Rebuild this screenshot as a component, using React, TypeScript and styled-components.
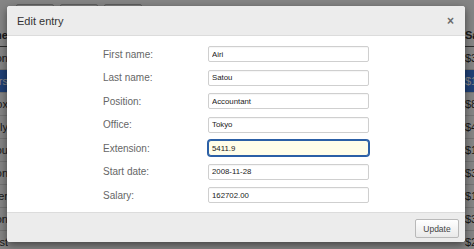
import { Fragment } from "react";
import styled, { createGlobalStyle } from "styled-components";

const GlobalStyle = createGlobalStyle`
    html, body {
        margin: 0;
        padding: 0;
        background: #ffffff;
    }
    body {
        font-family: "Liberation Sans", Arial, sans-serif;
    }
`;

const Page = styled.div`
    position: relative;
    width: 474px;
    height: 249px;
    overflow: hidden;
    background: #ffffff;
`;

const Toolbar = styled.div`
    display: flex;
    gap: 6px;
    height: 24px;
    padding: 0 0 0 16px;
    align-items: flex-end;
`;

const ToolButton = styled.div`
    width: 36px;
    height: 18px;
    border: 1px solid #b8b8b8;
    border-radius: 2px;
    background: #f4f4f4;
`;

const Table = styled.div`
    display: flex;
    flex-direction: column;
    font-size: 11px;
    color: #333;
`;

const TableRow = styled.div<{ $selected?: boolean; $head?: boolean }>`
    display: grid;
    grid-template-columns: 8px 457px 40px;
    height: 22px;
    align-items: center;
    border-bottom: 1px solid ${(p) => (p.$head ? "#555" : "#ddd")};
    background: ${(p) => (p.$selected ? "#3e7be0" : "#fff")};
    color: ${(p) => (p.$selected ? "#fff" : "#333")};
    font-weight: ${(p) => (p.$head ? 700 : 400)};
`;

const CutCell = styled.div`
    overflow: hidden;
    white-space: nowrap;
    direction: rtl;
    text-align: left;
`;

const Cell = styled.div`
    white-space: nowrap;
    overflow: hidden;
`;

const Backdrop = styled.div`
    position: absolute;
    inset: 0;
    background: rgba(0, 0, 0, 0.48);
    padding: 6px 9px 7px 7px;
    display: flex;
`;

const Modal = styled.div`
    width: 458px;
    height: 236px;
    background: #fff;
    border-radius: 3px;
    box-shadow: 0 3px 9px rgba(0, 0, 0, 0.5);
    display: flex;
    flex-direction: column;
    overflow: hidden;
`;

const Header = styled.div`
    height: 30px;
    box-sizing: border-box;
    display: flex;
    align-items: center;
    justify-content: space-between;
    padding: 0 11px 0 10px;
    background: #ececec;
    border-bottom: 1px solid #dcdcdc;
`;

const Title = styled.div`
    font-size: 11px;
    color: #333;
`;

const Close = styled.div`
    font-size: 12px;
    font-weight: 700;
    color: #6a6a6a;
    line-height: 1;
`;

const Body = styled.div`
    flex: 1;
    display: grid;
    grid-template-columns: 105px 161px;
    grid-auto-rows: 16px;
    row-gap: 7.5px;
    padding: 10px 0 0 96px;
    align-content: start;
`;

const Label = styled.label`
    font-size: 10px;
    color: #666;
    align-self: center;
`;

const Field = styled.input<{ $focus?: boolean }>`
    box-sizing: border-box;
    width: 161px;
    height: 16px;
    margin: 0;
    padding: 0 3px;
    font-family: "Liberation Sans", Arial, sans-serif;
    font-size: 7.8px;
    color: #222;
    border: 1px solid ${(p) => (p.$focus ? "#2b5fa6" : "#cfcfcf")};
    border-radius: ${(p) => (p.$focus ? "3px" : "2px")};
    background: ${(p) => (p.$focus ? "#fffde9" : "#fff")};
    box-shadow: ${(p) => (p.$focus ? "0 0 0 1px #2b5fa6" : "inset 0 1px 1px rgba(0,0,0,0.04)")};
    outline: none;
`;

const Footer = styled.div`
    height: 30px;
    box-sizing: border-box;
    display: flex;
    justify-content: flex-end;
    align-items: center;
    padding: 2px 6px 0 0;
    background: #ececec;
    border-top: 1px solid #dcdcdc;
`;

const UpdateButton = styled.button`
    width: 44px;
    height: 19px;
    padding: 0;
    font-family: "Liberation Sans", Arial, sans-serif;
    font-size: 8.5px;
    color: #444;
    border: 1px solid #b9b9b9;
    border-radius: 2px;
    background: linear-gradient(#ffffff, #e9e9e9);
`;

const rows = [
    { name: "Tiger Nixon", salary: "$320,800" },
    { name: "Garrett Winters", salary: "$170,750", selected: true },
    { name: "Ashton Cox", salary: "$86,000" },
    { name: "Cedric Kelly", salary: "$433,060" },
    { name: "Airi Satou", salary: "$162,700" },
    { name: "Brielle Williamson", salary: "$372,000" },
    { name: "Herrod Chandler", salary: "$137,500" },
    { name: "Rhona Davidson", salary: "$327,900" },
    { name: "Colleen Hurst", salary: "$205,500" },
];

const fields = [
    { label: "First name:", value: "Airi" },
    { label: "Last name:", value: "Satou" },
    { label: "Position:", value: "Accountant" },
    { label: "Office:", value: "Tokyo" },
    { label: "Extension:", value: "5411.9", focus: true },
    { label: "Start date:", value: "2008-11-28" },
    { label: "Salary:", value: "162702.00" },
];

export default function App() {
    return (
        <>
            <GlobalStyle />
            <Page>
                <Toolbar>
                    <ToolButton />
                    <ToolButton />
                    <ToolButton />
                </Toolbar>
                <Table>
                    <TableRow $head>
                        <CutCell>Name</CutCell>
                        <Cell />
                        <Cell>Salary</Cell>
                    </TableRow>
                    {rows.map((r) => (
                        <TableRow key={r.name} $selected={r.selected}>
                            <CutCell>{r.name}</CutCell>
                            <Cell />
                            <Cell>{r.salary}</Cell>
                        </TableRow>
                    ))}
                </Table>
                <Backdrop>
                    <Modal>
                        <Header>
                            <Title>Edit entry</Title>
                            <Close>×</Close>
                        </Header>
                        <Body>
                            {fields.map((f) => (
                                <Fragment key={f.label}>
                                    <Label>{f.label}</Label>
                                    <Field
                                        $focus={f.focus}
                                        defaultValue={f.value}
                                        readOnly
                                    />
                                </Fragment>
                            ))}
                        </Body>
                        <Footer>
                            <UpdateButton type="button">Update</UpdateButton>
                        </Footer>
                    </Modal>
                </Backdrop>
            </Page>
        </>
    );
}
